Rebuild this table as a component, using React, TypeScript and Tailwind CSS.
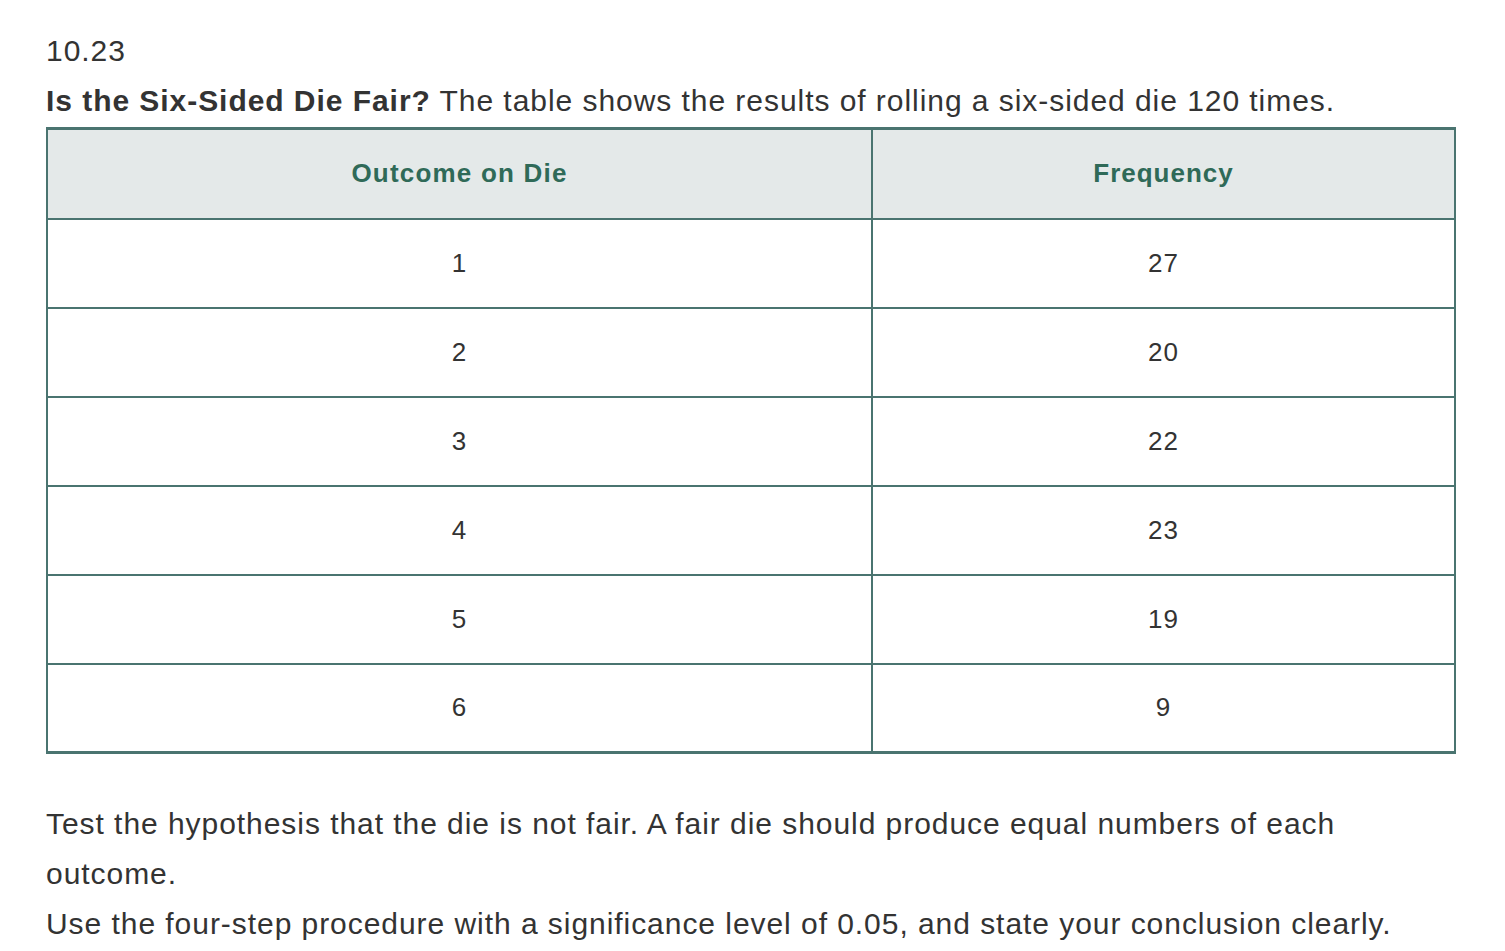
const rows = [
  { outcome: "1", freq: "27" },
  { outcome: "2", freq: "20" },
  { outcome: "3", freq: "22" },
  { outcome: "4", freq: "23" },
  { outcome: "5", freq: "19" },
  { outcome: "6", freq: "9" },
];

export default function App() {
  return (
    <div
      className="min-h-screen bg-white pl-[46px] pr-[49px] pt-[29px] text-[#333333] tracking-[0.95px]"
      style={{ fontFamily: '"Liberation Sans", Arial, sans-serif' }}
    >
      <p className="text-[30px] leading-[44px]">10.23</p>
      <p className="mt-[6px] text-[30px] leading-[44px]">
        <span className="font-bold">Is the Six-Sided Die Fair?</span> The table shows the results of rolling a six-sided die 120 times.
      </p>

      <table className="mt-[4px] w-full border-collapse border-t-[3px] border-b-[3px] border-[#4a7470] text-[26px]">
        <thead>
          <tr className="bg-[#e4e9e9] text-[#2f6a58]">
            <th className="h-[90px] w-[825px] border-x-2 border-b-2 border-[#4a7470] font-bold tracking-[1.2px]">Outcome on Die</th>
            <th className="h-[90px] border-x-2 border-b-2 border-[#4a7470] font-bold tracking-[1px]">Frequency</th>
          </tr>
        </thead>
        <tbody>
          {rows.map((r) => (
            <tr key={r.outcome}>
              <td className="h-[89px] border-2 border-[#4a7470] text-center">{r.outcome}</td>
              <td className="h-[89px] border-2 border-[#4a7470] text-center">{r.freq}</td>
            </tr>
          ))}
        </tbody>
      </table>

      <div className="mt-[45px] text-[30px] leading-[50px]">
        <p>Test the hypothesis that the die is not fair. A fair die should produce equal numbers of each outcome.</p>
        <p>Use the four-step procedure with a significance level of 0.05, and state your conclusion clearly.</p>
      </div>
    </div>
  );
}
